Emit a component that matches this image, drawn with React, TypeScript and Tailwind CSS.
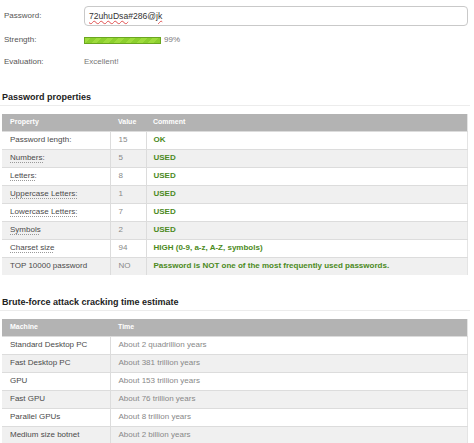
import React from "react";

type PropRow = {
  label: string;
  abbr?: boolean;
  value: string;
  comment: string;
};

const PROPS: PropRow[] = [
  { label: "Password length:", value: "15", comment: "OK" },
  { label: "Numbers:", abbr: true, value: "5", comment: "USED" },
  { label: "Letters:", abbr: true, value: "8", comment: "USED" },
  { label: "Uppercase Letters:", abbr: true, value: "1", comment: "USED" },
  { label: "Lowercase Letters:", abbr: true, value: "7", comment: "USED" },
  { label: "Symbols", abbr: true, value: "2", comment: "USED" },
  { label: "Charset size", abbr: true, value: "94", comment: "HIGH (0-9, a-z, A-Z, symbols)" },
  { label: "TOP 10000 password", value: "NO", comment: "Password is NOT one of the most frequently used passwords." },
];

const CRACK: { machine: string; time: string }[] = [
  { machine: "Standard Desktop PC", time: "About 2 quadrillion years" },
  { machine: "Fast Desktop PC", time: "About 381 trillion years" },
  { machine: "GPU", time: "About 153 trillion years" },
  { machine: "Fast GPU", time: "About 76 trillion years" },
  { machine: "Parallel GPUs", time: "About 8 trillion years" },
  { machine: "Medium size botnet", time: "About 2 billion years" },
];

function SectionTitle({ children }: { children: React.ReactNode }) {
  return (
    <div className="h-[15px] border-b border-[#ececec] pl-[2px] text-[9px] font-bold leading-[13px] text-[#222]">
      {children}
    </div>
  );
}

const th = "h-[17px] px-[8px] text-left align-middle text-[7px] font-bold text-white";
const td = "h-[18px] border-t border-[#dcdcdc] px-[8px] align-middle text-[8px] leading-none";

export default function App() {
  return (
    <div className="h-[443px] w-[474px] overflow-hidden bg-white font-['Liberation_Sans',Arial,sans-serif]">
      {/* Check form */}
      <div className="pl-[4px] pr-[6px] pt-[6px]">
        <div className="flex h-[20px] items-center">
          <span className="w-[80px] text-[8px] text-[#555]">Password:</span>
          <div className="flex h-[20px] flex-1 items-center rounded-[4px] border border-[#c9c9c9] pl-[4px] text-[8.6px] text-[#333]">
            <span className="underline decoration-[#e05050] decoration-wavy decoration-[0.5px] underline-offset-[1px]">72uhuDsa</span>
            <span>#286@</span>
            <span className="underline decoration-[#e05050] decoration-wavy decoration-[0.5px] underline-offset-[1px]">jk</span>
          </div>
        </div>
        <div className="mt-[9px] flex h-[10px] items-center">
          <span className="w-[80px] text-[8px] text-[#555]">Strength:</span>
          <div className="h-[7px] w-[77px] border border-[#6aa61f] bg-[repeating-linear-gradient(135deg,#9edb3c_0px,#9edb3c_4px,#8ccf2e_4px,#8ccf2e_8px)]" />
          <span className="ml-[3px] text-[8px] text-[#777]">99%</span>
        </div>
        <div className="mt-[12px] flex h-[10px] items-center">
          <span className="w-[80px] text-[8px] text-[#555]">Evaluation:</span>
          <span className="text-[8px] text-[#777]">Excellent!</span>
        </div>
      </div>

      {/* Password properties */}
      <div className="mt-[24px] pr-[4px]">
        <SectionTitle>Password properties</SectionTitle>
        <table className="ml-[2px] mt-[8px] w-[466px] table-fixed border-collapse border-r border-[#e4e4e4]">
          <colgroup>
            <col className="w-[108px]" />
            <col className="w-[36px]" />
            <col />
          </colgroup>
          <thead>
            <tr className="bg-[#b3b3b3]">
              <th className={th}>Property</th>
              <th className={th}>Value</th>
              <th className={`${th} pl-[7px]`}>Comment</th>
            </tr>
          </thead>
          <tbody>
            {PROPS.map((r, i) => (
              <tr key={r.label} className={i % 2 === 1 ? "bg-[#f0f0f0]" : "bg-white"}>
                <td className={`${td} border-r text-[#4a4a4a]`}>
                  <span className={r.abbr ? "underline decoration-[#999] decoration-dotted underline-offset-[2px]" : ""}>
                    {r.label}
                  </span>
                </td>
                <td className={`${td} border-r text-[#888]`}>{r.value}</td>
                <td className={`${td} pl-[7px] font-bold text-[#4b8a1c]`}>{r.comment}</td>
              </tr>
            ))}
          </tbody>
        </table>
      </div>

      {/* Brute-force */}
      <div className="mt-[21px] pr-[4px]">
        <SectionTitle>Brute-force attack cracking time estimate</SectionTitle>
        <table className="ml-[2px] mt-[8px] w-[466px] table-fixed border-collapse border-r border-[#e4e4e4]">
          <colgroup>
            <col className="w-[108px]" />
            <col />
          </colgroup>
          <thead>
            <tr className="bg-[#b3b3b3]">
              <th className={th}>Machine</th>
              <th className={th}>Time</th>
            </tr>
          </thead>
          <tbody>
            {CRACK.map((r, i) => (
              <tr key={r.machine} className={i % 2 === 1 ? "bg-[#f0f0f0]" : "bg-white"}>
                <td className={`${td} border-r text-[#4a4a4a]`}>{r.machine}</td>
                <td className={`${td} text-[#888]`}>{r.time}</td>
              </tr>
            ))}
          </tbody>
        </table>
      </div>
    </div>
  );
}
